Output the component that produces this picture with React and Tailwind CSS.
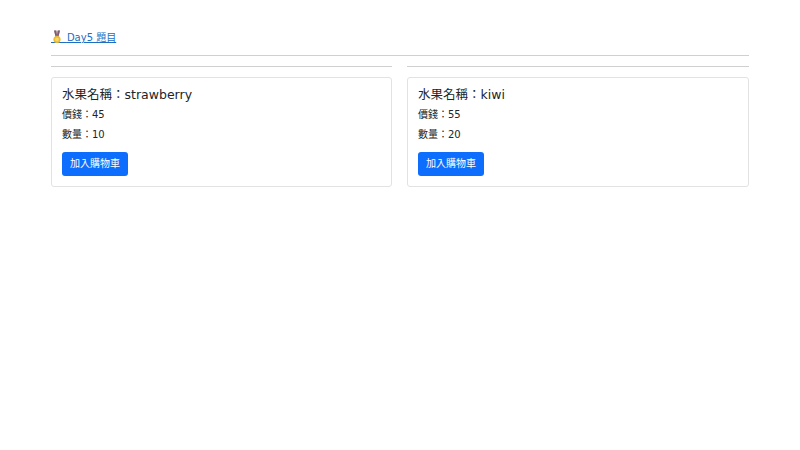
import React from 'react';

const fruits = [
    { name: 'strawberry', price: 45, qty: 10 },
    { name: 'kiwi', price: 55, qty: 20 },
];

const fontStack = "font-['DejaVu_Sans','Noto_Sans_CJK_TC',sans-serif]";

const Medal = () => (
    <svg viewBox="0 0 12 14" className="absolute left-0 top-[-2px] w-[12px] h-[14px]">
        <path d="M3 0.5h6L7.4 7H4.6z" fill="#c7b3ad" />
        <path d="M3 0.5h2L6 5 5 7h-.4z" fill="#7d5a78" />
        <path d="M9 0.5H7L6 5l1 2h.4z" fill="#7d5a78" />
        <circle cx="6" cy="9.5" r="3.6" fill="#efb92c" />
        <circle cx="6" cy="9.5" r="2" fill="#f7d766" />
    </svg>
);

const FruitCard = ({ fruit }) => (
    <div>
        <hr className="border-0 border-t border-[#d0d0d0] mb-[10px]" />
        <div className="border border-[#e2e2e2] rounded-[3px] px-[10px] pt-[9px] h-[110px]">
            <h5 className="text-[12.5px] leading-[15px] text-[#212529] mb-[5px]">水果名稱：{fruit.name}</h5>
            <p className="text-[10px] leading-[15px] text-[#212529] mb-[5px]">價錢：{fruit.price}</p>
            <p className="text-[10px] leading-[15px] text-[#212529] mb-[8px]">數量：{fruit.qty}</p>
            <button className="bg-[#0d6efd] text-white text-[10px] leading-[15px] px-[8px] py-[4px] rounded-[3px] h-[24px] whitespace-nowrap">
                加入購物車
            </button>
        </div>
    </div>
);

export default function App() {
    return (
        <div className={`${fontStack} bg-white min-h-[450px] px-[51px] pt-[30px]`}>
            <a href="#" className="text-[10px] leading-[15px] text-[#1b6ec2] underline block">
                <span className="relative">
                    <Medal />
                    {'\u00a0\u00a0\u00a0\u00a0\u00a0'}
                </span>
                Day5 題目
            </a>
            <hr className="border-0 border-t border-[#d0d0d0] mt-[10px] mb-[10px]" />
            <div className="grid grid-cols-[341px_1fr] gap-[15px]">
                {fruits.map((fruit) => (
                    <FruitCard key={fruit.name} fruit={fruit} />
                ))}
            </div>
        </div>
    );
}
